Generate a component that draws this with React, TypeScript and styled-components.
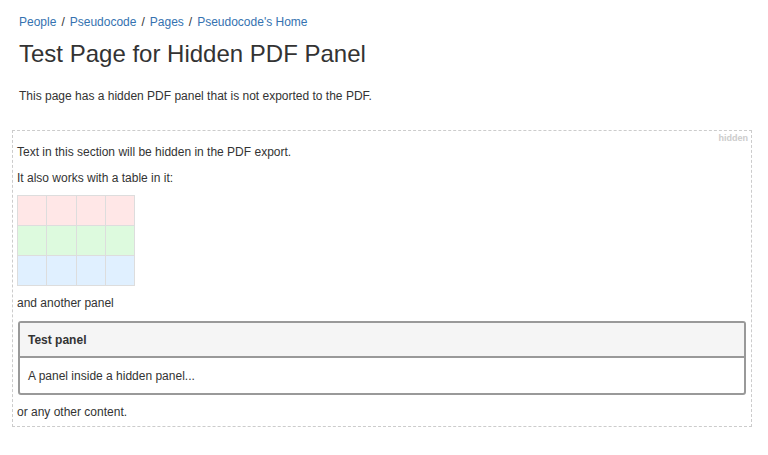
import React from 'react';
import styled, { createGlobalStyle } from 'styled-components';

const GlobalStyle = createGlobalStyle`
	body {
		margin: 0;
		background: #fff;
		font-family: Arial, "Liberation Sans", Helvetica, sans-serif;
		color: #333;
	}
`;

const Page = styled.div`
	padding: 13px 16px 0 12px;
`;

const Header = styled.div`
	padding-left: 7px;
`;

const Breadcrumbs = styled.ol`
	display: flex;
	list-style: none;
	margin: 0;
	padding: 0;
	font-size: 12px;
	line-height: 18px;
	li + li::before {
		content: '/';
		color: #333;
		padding: 0 5px;
	}
	a {
		color: #3572b0;
		text-decoration: none;
	}
`;

const Title = styled.h1`
	margin: 7px 0 0;
	font-size: 24px;
	font-weight: normal;
	line-height: 32px;
	color: #333;
`;

const Intro = styled.p`
	margin: 17px 0 0;
	font-size: 12px;
	line-height: 18px;
`;

const HiddenSection = styled.section`
	position: relative;
	margin-top: 25px;
	border: 1px dashed #ccc;
	padding: 12px 4px 5px;
	font-size: 12px;
	line-height: 18px;
	&::after {
		content: 'hidden';
		position: absolute;
		top: 1px;
		right: 3px;
		font-size: 9px;
		font-weight: bold;
		color: #ccc;
		line-height: 12px;
	}
`;

const Para = styled.p<{ $gap?: number }>`
	margin: ${(p) => p.$gap ?? 0}px 0 0;
`;

const ColorTable = styled.table`
	margin-top: 8px;
	width: 118px;
	border-collapse: collapse;
	td {
		height: 29px;
		padding: 0;
		border: 1px solid #ddd;
	}
`;

const TableRow = styled.tr<{ $bg: string }>`
	td {
		background: ${(p) => p.$bg};
	}
`;

const Panel = styled.div`
	margin: 9px 1px 0;
	border: 2px solid #999;
	border-radius: 3px;
	overflow: hidden;
`;

const PanelHeader = styled.div`
	background: #f5f5f5;
	border-bottom: 2px solid #999;
	padding: 8px 8px 7px;
	font-weight: bold;
	line-height: 18px;
`;

const PanelBody = styled.div`
	padding: 9px 8px 8px;
	line-height: 18px;
`;

const rows = ['#ffe7e7', '#ddfade', '#e0f0ff'];

export default function App() {
	return (
		<Page>
			<GlobalStyle />
			<Header>
				<Breadcrumbs>
					<li><a href="#">People</a></li>
					<li><a href="#">Pseudocode</a></li>
					<li><a href="#">Pages</a></li>
					<li><a href="#">Pseudocode's Home</a></li>
				</Breadcrumbs>
				<Title>Test Page for Hidden PDF Panel</Title>
				<Intro>This page has a hidden PDF panel that is not exported to the PDF.</Intro>
			</Header>
			<HiddenSection>
				<Para>Text in this section will be hidden in the PDF export.</Para>
				<Para $gap={8}>It also works with a table in it:</Para>
				<ColorTable>
					<tbody>
						{rows.map((bg, i) => (
							<TableRow key={i} $bg={bg}>
								<td />
								<td />
								<td />
								<td />
							</TableRow>
						))}
					</tbody>
				</ColorTable>
				<Para $gap={8}>and another panel</Para>
				<Panel>
					<PanelHeader>Test panel</PanelHeader>
					<PanelBody>A panel inside a hidden panel...</PanelBody>
				</Panel>
				<Para $gap={8}>or any other content.</Para>
			</HiddenSection>
		</Page>
	);
}
